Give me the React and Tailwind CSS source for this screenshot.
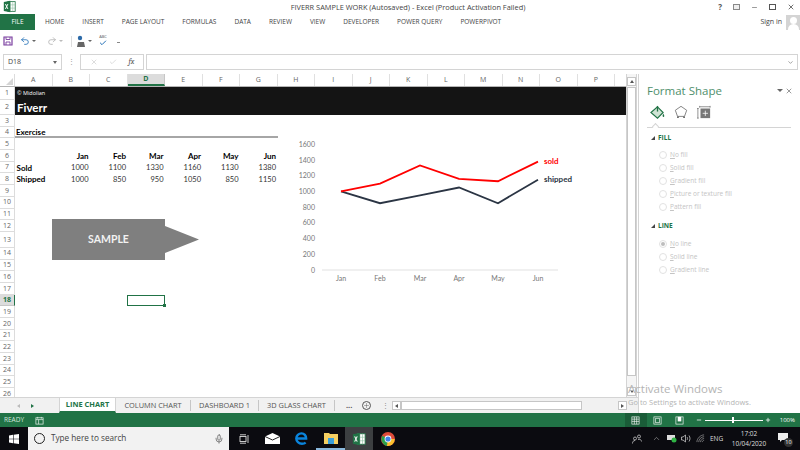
import { Check, ChevronDown, Minus, Mic, Plus, Undo2, Redo2, X } from 'lucide-react'

const UI_FONT = { fontFamily: '"Open Sans", "Noto Sans", sans-serif' }

const TABS = ['HOME', 'INSERT', 'PAGE LAYOUT', 'FORMULAS', 'DATA', 'REVIEW', 'VIEW', 'DEVELOPER', 'POWER QUERY', 'POWERPIVOT']
const COLUMNS = ['A', 'B', 'C', 'D', 'E', 'F', 'G', 'H', 'I', 'J', 'K', 'L', 'M', 'N', 'O', 'P']
const ROW_HEIGHTS = { 1: 'h-[13px]', 2: 'h-[15px]', 13: 'h-[16px]' }
const ROWS = Array.from({ length: 26 }, (_, i) => i + 1)

const TABLE = {
  6: ['', 'Jan', 'Feb', 'Mar', 'Apr', 'May', 'Jun'],
  7: ['Sold', '1000', '1100', '1330', '1160', '1130', '1380'],
  8: ['Shipped', '1000', '850', '950', '1050', '850', '1150'],
}

const MONTHS = ['Jan', 'Feb', 'Mar', 'Apr', 'May', 'Jun']
const MONTH_X = [341, 380, 420, 459, 498, 538]
const SOLD = [1000, 1100, 1330, 1160, 1130, 1380]
const SHIPPED = [1000, 850, 950, 1050, 850, 1150]
const TICKS = [0, 200, 400, 600, 800, 1000, 1200, 1400, 1600]

const FILL_OPTIONS = ['No fill', 'Solid fill', 'Gradient fill', 'Picture or texture fill', 'Pattern fill']
const LINE_OPTIONS = ['No line', 'Solid line', 'Gradient line']
const SHEETS = [
  { name: 'COLUMN CHART', width: 'w-[75px]' },
  { name: 'DASHBOARD 1', width: 'w-[68px]' },
  { name: '3D GLASS CHART', width: 'w-[76px]' },
]

// chart is drawn in page coordinates, offset by its box at 290,130
const yOf = (v) => 270 - 130 - (v / 1600) * 125.7
const points = (values) => values.map((v, i) => `${MONTH_X[i] - 290},${yOf(v)}`).join(' ')

function ExcelLogo({ size = 14 }) {
  return (
    <svg width={size} height={size} viewBox="0 0 16 16">
      <rect x="6" y="2" width="9" height="12" fill="#fff" stroke="#217346" />
      <path d="M9 2v12M12 2v12M6 6h9M6 10h9" stroke="#8fbfa3" strokeWidth="0.7" />
      <path d="M1 2.5 9 1v14l-8-1.5z" fill="#217346" />
      <path d="m3 5 3 6M6 5l-3 6" stroke="#fff" strokeWidth="1.2" />
    </svg>
  )
}

function SectionHeader({ label }) {
  return (
    <div className="flex items-center h-[12px] pl-[4px] gap-[3px]">
      <span className="w-0 h-0 border-l-[4px] border-l-transparent border-b-[4px] border-b-[#444]" />
      <span className="text-[6.5px] font-bold text-[#217346]">{label}</span>
    </div>
  )
}

function RadioRow({ label, checked }) {
  return (
    <div className="flex items-center h-[13px] pl-[12px] gap-[3px]">
      <span className="flex items-center justify-center w-[8px] h-[8px] rounded-full border border-[#e2e2e2]">
        {checked && <span className="w-[4px] h-[4px] rounded-full bg-[#bdbdbd]" />}
      </span>
      <span className="text-[6.5px] text-[#c4c4c4]">
        <span className="underline">{label[0]}</span>
        {label.slice(1)}
      </span>
    </div>
  )
}

function FormatPanel() {
  return (
    <div className="w-[162px] border-l border-[#d4d4d4] bg-white pl-[8px] pt-[3px] flex flex-col" style={UI_FONT}>
      <div className="flex items-center justify-between h-[27px] pr-[7px]">
        <span className="text-[11.5px] text-[#217346] opacity-80">Format Shape</span>
        <div className="flex items-center gap-[2px] text-[#666]">
          <span className="w-0 h-0 border-x-[3px] border-x-transparent border-t-[3px] border-t-[#666]" />
          <X size={8} strokeWidth={2} />
        </div>
      </div>
      <div className="flex items-center h-[16px] gap-[9px] pl-[3px]">
        <svg width="15" height="15" viewBox="0 0 16 16">
          <path d="m8 2 6 6-6 6-7-6z" fill="#cfe3d4" stroke="#217346" strokeWidth="1.2" />
          <path d="M8 1v6" stroke="#217346" strokeWidth="1.4" />
          <path d="M14 9c1 1.5 1.6 2.3 1 3.5-.8.6-1.6 0-1.6-1z" fill="#217346" />
        </svg>
        <svg width="14" height="14" viewBox="0 0 16 16" fill="none" stroke="#666" strokeWidth="0.9">
          <path d="M8 1.5 14.5 6l-2.5 7H4L1.5 6z" />
          <path d="M3.5 14h2M10.5 14h2" strokeWidth="1.6" />
        </svg>
        <svg width="14" height="14" viewBox="0 0 16 16">
          <rect x="4" y="4" width="11" height="11" fill="#777" />
          <path d="M3 2h12M3 1v2M15 1v2M1 4v11M0 4h2M0 15h2" stroke="#666" strokeWidth="0.8" />
          <path d="M9.5 6.5v6M6.5 9.5h6" stroke="#fff" strokeWidth="0.9" />
        </svg>
      </div>
      <div className="relative mt-[5px] mr-[9px] h-[3px] border-b border-[#d4d4d4]">
        <span className="absolute left-[6px] top-[-1px] w-[5px] h-[5px] rotate-45 bg-white border-l border-t border-[#d4d4d4]" />
      </div>
      <div className="mt-[4px]">
        <SectionHeader label="FILL" />
      </div>
      <div className="mt-[4.5px]">
        {FILL_OPTIONS.map((label) => (
          <RadioRow key={label} label={label} />
        ))}
      </div>
      <div className="mt-[6.5px]">
        <SectionHeader label="LINE" />
      </div>
      <div className="mt-[5px]">
        {LINE_OPTIONS.map((label, i) => (
          <RadioRow key={label} label={label} checked={i === 0} />
        ))}
      </div>
    </div>
  )
}

function SheetRow({ row }) {
  const height = ROW_HEIGHTS[row] || 'h-[11.7px]'
  const selected = row === 18
  const isBanner = row === 1 || row === 2

  return (
    <div className={`flex ${height}`}>
      <div
        className={`w-[15px] shrink-0 flex items-center justify-center pt-[1px] border-b border-r text-[7px] ${
          selected ? 'bg-[#dcdcdc] text-[#217346] font-bold border-r-[#217346] border-b-[#c6c6c6]' : 'bg-white text-[#666] border-[#dcdcdc]'
        }`}
        style={UI_FONT}
      >
        {row}
      </div>
      {isBanner && (
        <div className="flex-1 bg-[#141414] text-white flex items-center pl-[2px]">
          {row === 1 ? (
            <span className="text-[5.5px]" style={UI_FONT}>© Midolian</span>
          ) : (
            <span className="text-[11.5px] font-bold leading-none">Fiverr</span>
          )}
        </div>
      )}
      {row === 4 && (
        <div className="w-[263px] border-b-2 border-[#a6a6a6] flex items-center pl-[1px] text-[8px] font-bold text-black">
          Exercise
        </div>
      )}
      {TABLE[row] &&
        TABLE[row].map((value, i) => (
          <div
            key={i}
            className={`w-[37.5px] flex items-center px-[1.5px] ${
              i === 0 ? 'justify-start font-bold text-black text-[8px]' : 'justify-end'
            } ${row === 6 ? 'font-bold text-black text-[8px]' : i > 0 ? 'text-[#333] text-[7.5px]' : ''}`}
          >
            {value}
          </div>
        ))}
      {selected && (
        <div className="ml-[112px] w-[38px] relative border-[1.5px] border-[#217346]">
          <span className="absolute right-[-2px] bottom-[-2px] w-[3px] h-[3px] bg-[#217346]" />
        </div>
      )}
    </div>
  )
}

function LineChart() {
  return (
    <svg className="absolute left-[290px] top-[43px]" width="300" height="155" viewBox="0 0 300 155">
      {TICKS.map((t) => (
        <text key={t} x="25" y={yOf(t) + 2.5} textAnchor="end" fontSize="7" fill="#777">
          {t}
        </text>
      ))}
      <line x1="32" x2="268" y1="140" y2="140" stroke="#d9d9d9" strokeWidth="0.8" />
      {MONTHS.map((m, i) => (
        <text key={m} x={MONTH_X[i] - 290} y="151" textAnchor="middle" fontSize="7" fill="#777">
          {m}
        </text>
      ))}
      <polyline points={points(SHIPPED)} fill="none" stroke="#2b3544" strokeWidth="1.8" />
      <polyline points={points(SOLD)} fill="none" stroke="#ff0000" strokeWidth="1.8" />
      <text x="254" y="34" fontSize="8" fontWeight="700" fill="#ff0000">sold</text>
      <text x="254" y="52" fontSize="8" fontWeight="700" fill="#2b3544">shipped</text>
    </svg>
  )
}

function SampleArrow() {
  return (
    <div className="absolute left-[52px] top-[132px] w-[147px] h-[41px]">
      <svg className="absolute inset-0" width="147" height="41" viewBox="0 0 147 41">
        <path d="M0 0H113V7L147 20.5 113 34V41H0Z" fill="#7f7f7f" />
      </svg>
      <div className="relative w-[113px] h-full flex items-center justify-center text-[10.5px] font-bold text-[#f2f2f2]">
        SAMPLE
      </div>
    </div>
  )
}

function Worksheet() {
  return (
    <div className="flex-1 flex flex-col min-h-0" style={{ fontFamily: 'Lato, "Liberation Sans", sans-serif' }}>
      <div className="flex h-[13px] shrink-0 border-b border-[#b5b5b5]" style={UI_FONT}>
        <div className="w-[15px] flex items-end justify-end border-r border-[#dcdcdc] pr-[1px] pb-[1px]">
          <span className="w-0 h-0 border-l-[7px] border-l-transparent border-b-[7px] border-b-[#d4d4d4]" />
        </div>
        {COLUMNS.map((c) => (
          <div
            key={c}
            className={`w-[37.5px] flex items-center justify-center pt-[1px] text-[7px] border-r ${
              c === 'D'
                ? 'bg-[#dcdcdc] text-[#217346] font-bold border-b-2 border-b-[#217346] border-r-[#c6c6c6]'
                : 'text-[#666] border-[#e0e0e0]'
            }`}
          >
            {c}
          </div>
        ))}
      </div>
      <div className="relative flex-1 overflow-hidden bg-white">
        {ROWS.map((row) => (
          <SheetRow key={row} row={row} />
        ))}
        <SampleArrow />
        <LineChart />
      </div>
    </div>
  )
}

function VerticalScrollbar() {
  return (
    <div className="w-[11px] shrink-0 flex flex-col items-center border-x border-[#d4d4d4] bg-[#f5f5f5] pt-[3px] mr-[1px]">
      <div className="w-[9px] h-[9px] bg-white border border-[#c6c6c6] flex items-center justify-center">
        <span className="w-0 h-0 border-x-[2px] border-x-transparent border-b-[3px] border-b-[#555]" />
      </div>
      <div className="w-[9px] h-[289px] mt-[1px] bg-white border border-[#c6c6c6]" />
      <div className="w-[9px] h-[9px] mt-auto mb-[1px] bg-white border border-[#c6c6c6] flex items-center justify-center">
        <span className="w-0 h-0 border-x-[2px] border-x-transparent border-t-[3px] border-t-[#555]" />
      </div>
    </div>
  )
}

function SheetTabs() {
  return (
    <div className="flex items-center h-[16px] shrink-0 bg-[#f1f1f1] border-t border-[#d4d4d4] text-[7.4px] text-[#555]" style={UI_FONT}>
      <div className="w-[59px] flex items-center justify-end gap-[11px] pr-[25px]">
        <span className="w-0 h-0 border-y-[2px] border-y-transparent border-r-[3px] border-r-[#bbb]" />
        <span className="w-0 h-0 border-y-[2px] border-y-transparent border-l-[3px] border-l-[#217346]" />
      </div>
      <div className="flex items-center justify-center w-[57px] h-full bg-white border-x border-[#d4d4d4] border-b-2 border-b-[#217346] font-bold text-[#217346] whitespace-nowrap">
        LINE CHART
      </div>
      {SHEETS.map((sheet) => (
        <div key={sheet.name} className={`flex items-center justify-center h-[11px] border-r border-[#c6c6c6] whitespace-nowrap ${sheet.width}`}>
          {sheet.name}
        </div>
      ))}
      <span className="w-[10px] ml-[11px] font-bold text-[#444] leading-none">...</span>
      <span className="ml-[6px] flex items-center justify-center w-[9px] h-[9px] rounded-full border border-[#555]">
        <Plus size={7} strokeWidth={1.5} />
      </span>
      <span className="w-[4px] ml-[11px] text-[#888]">⋮</span>
      <div className="ml-[6px] flex items-center flex-1 h-[11px]">
        <div className="w-[9px] h-[9px] bg-white border border-[#c6c6c6] flex items-center justify-center">
          <span className="w-0 h-0 border-y-[2px] border-y-transparent border-r-[3px] border-r-[#555]" />
        </div>
        <div className="w-[181px] h-[9px] bg-white border border-[#c6c6c6]" />
        <div className="flex-1" />
        <div className="w-[9px] h-[9px] mr-[11px] bg-white border border-[#c6c6c6] flex items-center justify-center">
          <span className="w-0 h-0 border-y-[2px] border-y-transparent border-l-[3px] border-l-[#555]" />
        </div>
      </div>
    </div>
  )
}

function StatusBar() {
  return (
    <div className="flex items-center h-[14px] shrink-0 bg-[#217346] text-[6.5px] text-[#d5e6dc]" style={UI_FONT}>
      <span className="ml-[4px]">READY</span>
      <svg className="ml-[11px]" width="9" height="9" viewBox="0 0 10 10" fill="none" stroke="#e6f0ea" strokeWidth="0.8">
        <rect x="1" y="2" width="8" height="7" />
        <path d="M1 4h8M4 4v5" />
        <path d="M3 1v2M7 1v2" />
      </svg>
      <div className="ml-auto flex items-center h-full">
        <div className="flex items-center justify-center w-[22px] h-full bg-[#1a5c38]">
          <svg width="9" height="9" viewBox="0 0 10 10" fill="none" stroke="#fff" strokeWidth="0.7">
            <rect x="1" y="1" width="8" height="8" />
            <path d="M1 3.5h8M1 6h8M3.7 1v8M6.3 1v8" />
          </svg>
        </div>
        <div className="flex items-center justify-center w-[22px]">
          <svg width="9" height="9" viewBox="0 0 10 10" fill="none" stroke="#fff" strokeWidth="0.7">
            <rect x="1" y="1" width="8" height="8" />
            <rect x="3" y="2.5" width="4" height="5" />
          </svg>
        </div>
        <div className="flex items-center justify-center w-[22px]">
          <svg width="9" height="9" viewBox="0 0 10 10">
            <rect x="1" y="1" width="8" height="8" fill="none" stroke="#fff" strokeWidth="0.7" />
            <rect x="3" y="1" width="4" height="5" fill="#fff" />
          </svg>
        </div>
        <Minus className="ml-[5px] text-white" size={6} strokeWidth={3} />
        <div className="relative w-[58px] h-px ml-[3px] bg-white">
          <span className="absolute left-[27px] top-[-2.5px] w-[2px] h-[6px] bg-white" />
        </div>
        <Plus className="ml-[2px] text-white" size={6} strokeWidth={3} />
        <span className="ml-[9px] mr-[5px] text-[6px] text-white">100%</span>
      </div>
    </div>
  )
}

function Taskbar() {
  return (
    <div className="flex items-center h-[23px] shrink-0 bg-[#0b0b10] text-white" style={UI_FONT}>
      <div className="flex items-center justify-center w-[28px]">
        <svg width="10" height="10" viewBox="0 0 10 10" fill="#fff">
          <path d="M0 1.4 4 .8v3.9H0zM4.6.7 10 0v4.7H4.6zM0 5.3h4v3.9l-4-.6zM4.6 5.3H10V10l-5.4-.7z" />
        </svg>
      </div>
      <div className="flex items-center w-[201px] h-full bg-[#f2f2f2] text-[#444]">
        <span className="ml-[6px] w-[11px] h-[11px] rounded-full border-[1.5px] border-[#222]" />
        <span className="ml-[6px] text-[8.2px]">Type here to search</span>
        <Mic className="ml-auto mr-[5px] text-[#444]" size={10} strokeWidth={1.5} />
      </div>
      <div className="flex items-center justify-center w-[29px]">
        <svg width="10" height="10" viewBox="0 0 10 10" fill="none" stroke="#ddd" strokeWidth="0.9">
          <rect x="1" y="2.5" width="6" height="5" />
          <path d="M1 .8h6M1 9.2h6M9 1v8" />
        </svg>
      </div>
      <div className="flex items-center justify-center w-[28px]">
        <svg width="15" height="11" viewBox="0 0 15 11">
          <path d="M0 3.5 7.5 0 15 3.5V11H0z" fill="#fff" />
          <path d="M0 3.5 7.5 7 15 3.5" fill="none" stroke="#222" strokeWidth="1" />
        </svg>
      </div>
      <div className="flex items-center justify-center w-[30px]">
        <svg width="13" height="13" viewBox="0 0 14 14" fill="none" stroke="#0a84dc" strokeWidth="2.6">
          <path d="M2 7h10c0-3-2-5.500-5-5.500S1.400 4 1.400 7 4 12.700 7.500 12.700c1.500 0 3-.4 4-1.200" />
        </svg>
      </div>
      <div className="flex items-center justify-center w-[29px] h-full border-b-2 border-b-[#8ab8dc]">
        <svg width="14" height="12" viewBox="0 0 14 12">
          <path d="M0 1h5l1 1h8v10H0z" fill="#f5cf62" />
          <rect x="4" y="6" width="6" height="6" fill="#3aa0dc" />
        </svg>
      </div>
      <div className="flex items-center justify-center w-[28px] h-full bg-[#3c3f41]">
        <ExcelLogo size={14} />
      </div>
      <div className="flex items-center justify-center w-[30px]">
        <svg width="14" height="14" viewBox="0 0 14 14">
          <circle cx="7" cy="7" r="7" fill="#de4b3a" />
          <path d="M7 7 1.300 3.700A7 7 0 0 0 6 13.900z" fill="#2ba14b" />
          <path d="M7 7h6.800A7 7 0 0 1 6 13.900z" fill="#fbc02d" />
          <circle cx="7" cy="7" r="3.400" fill="#fff" />
          <circle cx="7" cy="7" r="2.600" fill="#3f83ea" />
        </svg>
      </div>
      <div className="ml-auto flex items-center text-[#ddd]">
        <svg width="10" height="10" viewBox="0 0 10 10" fill="none" stroke="#ddd" strokeWidth="0.7">
          <circle cx="3" cy="4.500" r="1.500" />
          <circle cx="7" cy="2.500" r="1.500" />
          <path d="M.5 9.500c0-2 1-3 2.500-3M6 5.500c1.500-.5 3.500 0 3.500 2" />
        </svg>
        <ChevronDown className="ml-[10px] rotate-180" size={9} strokeWidth={1.2} />
        <svg className="ml-[6px]" width="10" height="9" viewBox="0 0 10 9">
          <rect x="0" y="1" width="8" height="5" fill="#ddd" />
          <circle cx="7" cy="6" r="2.500" fill="#2fb344" />
        </svg>
        <svg className="ml-[4px]" width="10" height="9" viewBox="0 0 10 9" fill="none" stroke="#ddd" strokeWidth="0.7">
          <path d="M0.500 3h1.500L4.500 1v7L2 6H.5zM6 3c.6.800.6 2.200 0 3M8 1.500c1.300 1.800 1.300 4.200 0 6" />
        </svg>
        <svg className="ml-[5px]" width="9" height="9" viewBox="0 0 10 10" fill="none" stroke="#aaa" strokeWidth="0.7">
          <path d="M1 9C1 5 5 1 9 1M3 9c0-3 3-6 6-6M5 9c0-2 2-4 4-4M7 9c0-1 1-2 2-2" />
        </svg>
        <span className="ml-[5px] w-[14px] text-[6.5px]">ENG</span>
        <div className="ml-[8px] w-[34px] flex flex-col items-center text-[6.5px] leading-[9.500px] whitespace-nowrap">
          <span>17:02</span>
          <span>10/04/2020</span>
        </div>
        <div className="relative ml-[12px] mr-[10px] w-[12px] h-[12px]">
          <svg width="10" height="10" viewBox="0 0 10 10" fill="#eee">
            <path d="M0 0h10v7H4L2 9V7H0z" />
          </svg>
          <span className="absolute right-[-3px] bottom-[-2px] flex items-center justify-center w-[9px] h-[9px] rounded-full bg-[#333] text-[5.5px] text-white">
            10
          </span>
        </div>
      </div>
    </div>
  )
}

export default function App() {
  return (
    <div className="relative w-[800px] h-[450px] overflow-hidden bg-white flex flex-col" style={UI_FONT}>
      {/* title bar */}
      <div className="relative flex items-center justify-center h-[14px] pt-[2px] shrink-0 text-[7.4px] text-[#444]">
        <span className="absolute left-[3px] top-[0px]">
          <ExcelLogo size={13} />
        </span>
        <span className="ml-[16px]">FIVERR SAMPLE WORK (Autosaved) - Excel (Product Activation Failed)</span>
        <div className="absolute right-[5px] top-[3px] flex items-center gap-[11px] text-[#555]">
          <span className="text-[8px] font-bold leading-none">?</span>
          <span className="w-[7px] h-[6px] border border-[#888] bg-[#eee]" />
          <Minus size={7} strokeWidth={2} />
          <span className="w-[7px] h-[6px] border border-[#555]" />
          <X size={8} strokeWidth={2.5} />
        </div>
      </div>

      {/* ribbon tabs */}
      <div className="flex items-center h-[16px] shrink-0 text-[6.5px] text-[#444]">
        <div className="flex items-center justify-center w-[35px] h-full bg-[#217346] text-white">FILE</div>
        <div className="flex items-center gap-[18px] ml-[10px]">
          {TABS.map((tab) => (
            <span key={tab} className="whitespace-nowrap">{tab}</span>
          ))}
        </div>
        <div className="ml-auto flex items-center gap-[4px] h-full">
          <span className="text-[7px]">Sign in</span>
          <div className="relative w-[14px] h-[15px] bg-[#d4d4d4] overflow-hidden">
            <span className="absolute left-[3.500px] top-[2px] w-[7px] h-[7px] rounded-full bg-white" />
            <span className="absolute left-[1.500px] top-[9px] w-[11px] h-[8px] rounded-t-full bg-white" />
          </div>
        </div>
      </div>

      {/* quick access toolbar */}
      <div className="flex items-center h-[22px] shrink-0 pl-[3px] text-[#666]">
        <svg width="10" height="10" viewBox="0 0 10 10" fill="none" stroke="#7b3fa0" strokeWidth="1.2">
          <path d="M1 1h8v8H1z" />
          <path d="M3 1v2.500h4V1M3 9V6h4v3" strokeWidth="0.9" />
        </svg>
        <Undo2 className="ml-[7px] text-[#2672b8]" size={10} strokeWidth={2} />
        <span className="ml-[2px] w-0 h-0 border-x-[2px] border-x-transparent border-t-[2px] border-t-[#666]" />
        <Redo2 className="ml-[11px] text-[#b5b5b5]" size={10} strokeWidth={2} />
        <span className="ml-[2px] w-0 h-0 border-x-[2px] border-x-transparent border-t-[2px] border-t-[#bbb]" />
        <span className="ml-[8px] w-px h-[11px] bg-[#ddd]" />
        <svg className="ml-[4px]" width="10" height="12" viewBox="0 0 10 12">
          <circle cx="4" cy="3" r="2.200" fill="#2c6aa8" />
          <path d="M2 7h6l1 5H1z" fill="#666" />
        </svg>
        <span className="ml-[2px] w-0 h-0 border-x-[2px] border-x-transparent border-t-[2px] border-t-[#666]" />
        <div className="ml-[7px] flex flex-col items-center">
          <span className="text-[4px] leading-none text-[#555]">ABC</span>
          <Check className="text-[#2672b8]" size={8} strokeWidth={3} />
        </div>
        <span className="ml-[10px] w-[3px] h-[3px] border-b border-[#888]" />
      </div>

      {/* formula bar */}
      <div className="flex items-center h-[16px] mt-[2px] shrink-0 pl-[3px] text-[7px] text-[#444]">
        <div className="flex items-center justify-between w-[59px] h-full px-[4px] border border-[#d4d4d4]">
          <span>D18</span>
          <span className="w-0 h-0 border-x-[2.500px] border-x-transparent border-t-[3px] border-t-[#666]" />
        </div>
        <span className="w-[18px] text-center text-[#999]">⋮</span>
        <div className="flex items-center justify-around w-[64px] h-full border border-[#d4d4d4] px-[3px] text-[#bbb]">
          <X size={8} strokeWidth={1.5} />
          <Check size={8} strokeWidth={1.5} />
          <span className="italic font-serif text-[#555] text-[8px]">fx</span>
        </div>
        <div className="flex items-center justify-end flex-1 h-full ml-[2px] mr-[2px] border border-[#d4d4d4] pr-[3px]">
          <ChevronDown className="text-[#666]" size={7} strokeWidth={2} />
        </div>
      </div>

      <div className="h-[4px] shrink-0" />

      {/* sheet + format pane */}
      <div className="flex flex-1 min-h-0">
        <div className="flex flex-col w-[638px] shrink-0">
          <div className="flex flex-1 min-h-0">
            <Worksheet />
            <VerticalScrollbar />
          </div>
          <SheetTabs />
        </div>
        <FormatPanel />
      </div>

      <StatusBar />
      <Taskbar />

      {/* watermark sits over the pane */}
      <div className="absolute left-[628px] top-[381px] z-10 text-[#b4b4b4] pointer-events-none whitespace-nowrap">
        <div className="text-[11.500px] leading-[15px]">Activate Windows</div>
        <div className="mt-[1px] text-[7.500px] leading-[10px]">Go to Settings to activate Windows.</div>
      </div>
    </div>
  )
}
